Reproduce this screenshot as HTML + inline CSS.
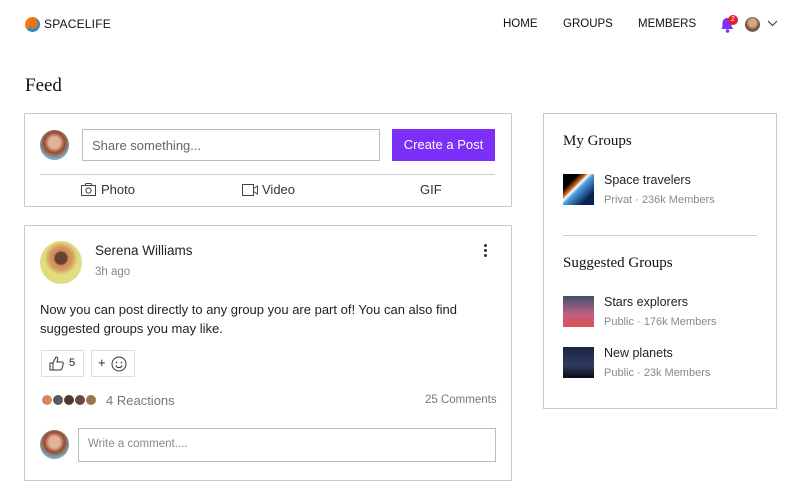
<!DOCTYPE html>
<html><head><meta charset="utf-8"><style>
*{box-sizing:border-box;margin:0;padding:0}
body{width:800px;height:488px;background:#fff;font-family:"Liberation Sans",sans-serif;color:#222;position:relative;overflow:hidden}
.a{position:absolute}
.box{position:absolute;border:1px solid #c8c8c8;background:#fff}
.serif{font-family:"Liberation Serif",serif}
.av{border-radius:50%;position:absolute}
.g{color:#888}
</style></head><body>
<div class="a" style="left:25px;top:17px;width:15px;height:15px;border-radius:50%;background:linear-gradient(135deg,#f07a1a 0 45%,#1c8ed0 55%)"></div>
<div class="a" style="left:29px;top:19px;width:9px;height:10px;border-radius:50%;background:#e8701a"></div>
<div class="a" style="left:44px;top:17px;font-size:12px;letter-spacing:0.2px;color:#111">SPACELIFE</div>
<div class="a" style="left:503px;top:18px;font-size:11.5px;color:#111">HOME</div>
<div class="a" style="left:563px;top:18px;font-size:11.5px;color:#111">GROUPS</div>
<div class="a" style="left:638px;top:18px;font-size:11.5px;color:#111">MEMBERS</div>
<svg class="a" style="left:719px;top:15px" width="18" height="19" viewBox="0 0 18 19"><path d="M2.5 14h12l-2-2.5V7.5a4.5 4.5 0 0 0-9 0v4z" fill="#7b2ff7"/><circle cx="8.5" cy="16" r="1.8" fill="#7b2ff7"/></svg>
<div class="a" style="left:728px;top:15px;width:10px;height:10px;border-radius:50%;background:#e0202a;color:#fff;font-size:7px;text-align:center;line-height:10px">2</div>
<div class="av" style="left:745px;top:17px;width:15px;height:15px;background:radial-gradient(circle at 50% 40%,#d9a58a 30%,#6b4a3a 60%,#9fb7c4)"></div>
<svg class="a" style="left:767px;top:20px" width="11" height="8"><path d="M1 1l4.5 4.5L10 1" stroke="#333" fill="none"/></svg>
<div class="a serif" style="left:25px;top:75px;font-size:19px;color:#111">Feed</div>

<div class="box" style="left:24px;top:113px;width:488px;height:94px"></div>
<div class="av" style="left:40px;top:130px;width:29px;height:30px;background:radial-gradient(circle at 50% 42%,#e0b29a 25%,#9a4a2a 45%,#7fa9c0 70%)"></div>
<div class="box" style="left:82px;top:129px;width:298px;height:32px;border-color:#bbb"></div>
<div class="a g" style="left:92px;top:138px;font-size:13px;color:#666">Share something...</div>
<div class="a" style="left:392px;top:129px;width:103px;height:32px;background:#7b2ff7;color:#fff;font-size:13px;text-align:center;line-height:32px">Create a Post</div>
<div class="a" style="left:40px;top:174px;width:455px;height:1px;background:#ccc"></div>
<svg class="a" style="left:81px;top:183px" width="15" height="13"><rect x="0.5" y="2.5" width="14" height="10" fill="none" stroke="#444"/><path d="M4 2.5l1-2h5l1 2" fill="none" stroke="#444"/><circle cx="7.5" cy="7.5" r="2.6" fill="none" stroke="#444"/></svg>
<div class="a" style="left:101px;top:182px;font-size:13px;color:#333">Photo</div>
<svg class="a" style="left:242px;top:184px" width="17" height="12"><rect x="0.5" y="0.5" width="11" height="11" fill="none" stroke="#444"/><path d="M11.5 4.5l4-2.5v8l-4-2.5" fill="none" stroke="#444"/></svg>
<div class="a" style="left:262px;top:182px;font-size:13px;color:#333">Video</div>
<div class="a" style="left:420px;top:182px;font-size:13px;color:#333">GIF</div>

<div class="box" style="left:24px;top:225px;width:488px;height:256px"></div>
<div class="av" style="left:40px;top:241px;width:42px;height:43px;background:radial-gradient(circle at 50% 40%,#6b4030 18%,#c98a5c 22%,#d99a60 35%,#e1dc80 50%)"></div>
<div class="a" style="left:95px;top:243px;font-size:13.5px;color:#222">Serena Williams</div>
<div class="a g" style="left:95px;top:266px;font-size:11.5px">3h ago</div>
<div class="a" style="left:484px;top:244px;width:3px;height:3px;border-radius:50%;background:#333;box-shadow:0 5px #333,0 10px #333"></div>
<div class="a" style="left:40px;top:300px;font-size:13px;line-height:19px;color:#222;width:460px">Now you can post directly to any group you are part of! You can also find suggested groups you may like.</div>
<div class="box" style="left:41px;top:350px;width:43px;height:27px;border-color:#ddd"></div>
<svg class="a" style="left:49px;top:356px" width="15" height="15"><path d="M1 7h3v7H1zM4 7l3-6c1.5 0 2 1 1.7 2.5L8 6h5c1 0 1.5 1 1.2 2l-1.4 5c-.3.7-.8 1-1.5 1H4" fill="none" stroke="#333"/></svg>
<div class="a" style="left:69px;top:357px;font-size:11px">5</div>
<div class="box" style="left:91px;top:350px;width:44px;height:27px;border-color:#ddd"></div>
<div class="a" style="left:98px;top:355px;font-size:13px">+</div>
<svg class="a" style="left:111px;top:356px" width="16" height="16"><circle cx="8" cy="8" r="7" fill="none" stroke="#333"/><circle cx="5.5" cy="6.5" r=".8" fill="#333"/><circle cx="10.5" cy="6.5" r=".8" fill="#333"/><path d="M4.8 9.5a3.5 3.5 0 0 0 6.4 0" fill="none" stroke="#333"/></svg>
<div class="av" style="left:42px;top:395px;width:10px;height:10px;background:#d08a60"></div>
<div class="av" style="left:53px;top:395px;width:10px;height:10px;background:#5a5a5a"></div>
<div class="av" style="left:64px;top:395px;width:10px;height:10px;background:#4a3a30"></div>
<div class="av" style="left:75px;top:395px;width:10px;height:10px;background:#6a4a40"></div>
<div class="av" style="left:86px;top:395px;width:10px;height:10px;background:#a07050"></div>
<div class="a g" style="left:106px;top:393px;font-size:13px;color:#777">4 Reactions</div>
<div class="a g" style="left:425px;top:394px;font-size:11.5px;color:#777">25 Comments</div>
<div class="av" style="left:40px;top:430px;width:29px;height:29px;background:radial-gradient(circle at 50% 42%,#e0b29a 25%,#9a4a2a 45%,#7fa9c0 70%)"></div>
<div class="box" style="left:78px;top:428px;width:418px;height:34px;border-color:#bbb"></div>
<div class="a g" style="left:88px;top:438px;font-size:11.5px;color:#888">Write a comment....</div>

<div class="box" style="left:543px;top:113px;width:234px;height:296px"></div>
<div class="a serif" style="left:563px;top:133px;font-size:15px;color:#111">My Groups</div>
<div class="a" style="left:563px;top:174px;width:31px;height:31px;background:linear-gradient(135deg,#000 25%,#e07020 38%,#fff 42%,#4aa0e0 50%,#0a2050 80%)"></div>
<div class="a" style="left:604px;top:173px;font-size:12.5px;color:#222">Space travelers</div>
<div class="a g" style="left:604px;top:194px;font-size:11px">Privat · 236k Members</div>
<div class="a" style="left:563px;top:235px;width:194px;height:1px;background:#ccc"></div>
<div class="a serif" style="left:563px;top:255px;font-size:15px;color:#111">Suggested Groups</div>
<div class="a" style="left:563px;top:296px;width:31px;height:31px;background:linear-gradient(180deg,#405070,#c06080 60%,#e05050)"></div>
<div class="a" style="left:604px;top:295px;font-size:12.5px;color:#222">Stars explorers</div>
<div class="a g" style="left:604px;top:316px;font-size:11px">Public · 176k Members</div>
<div class="a" style="left:563px;top:347px;width:31px;height:31px;background:linear-gradient(180deg,#1a2540,#303a60 60%,#0a0a10)"></div>
<div class="a" style="left:604px;top:346px;font-size:12.5px;color:#222">New planets</div>
<div class="a g" style="left:604px;top:367px;font-size:11px">Public · 23k Members</div>
</body></html>
